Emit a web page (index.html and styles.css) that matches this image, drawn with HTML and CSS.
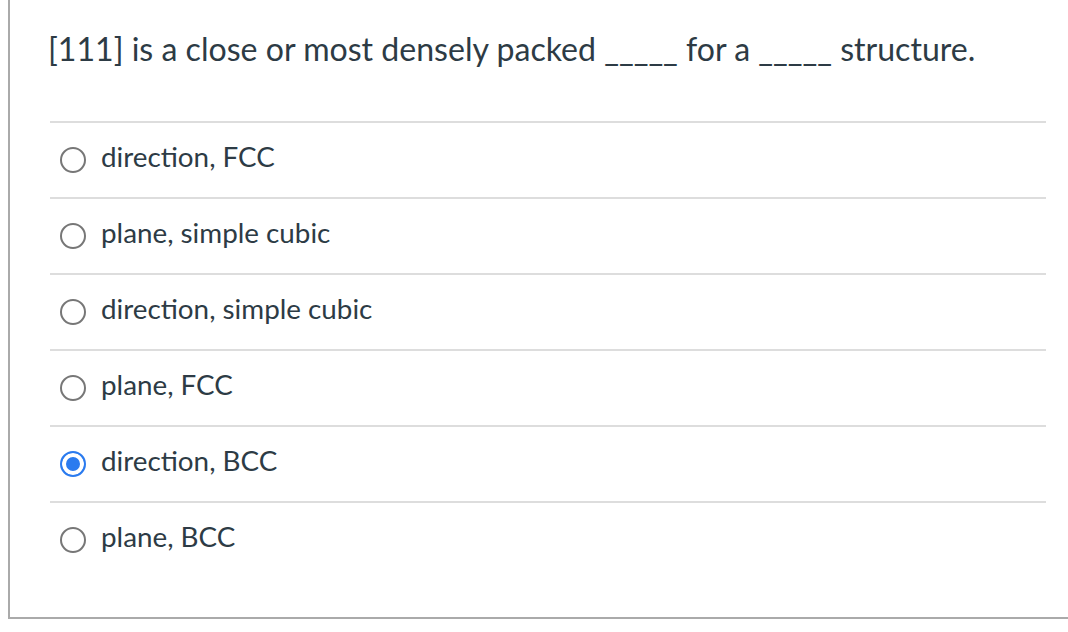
FILE: index.html
```html
<!DOCTYPE html>
<html>
<head>
<meta charset="utf-8">
<link rel="stylesheet" href="styles.css">
</head>
<body>
<div class="quiz">
  <div class="question">[111] is a close or most densely packed _____ for a _____ structure.</div>
  <div class="answers">
    <label class="answer"><span class="radio"></span><span class="label">direction, FCC</span></label>
    <label class="answer"><span class="radio"></span><span class="label">plane, simple cubic</span></label>
    <label class="answer"><span class="radio"></span><span class="label">direction, simple cubic</span></label>
    <label class="answer"><span class="radio"></span><span class="label">plane, FCC</span></label>
    <label class="answer"><span class="radio checked"></span><span class="label">direction, BCC</span></label>
    <label class="answer"><span class="radio"></span><span class="label">plane, BCC</span></label>
  </div>
</div>
</body>
</html>
```
FILE: styles.css
```css
html, body {
  margin: 0;
  padding: 0;
  background: #fff;
  overflow: hidden;
}
body {
  font-family: Lato, "Open Sans", sans-serif;
  color: #2d3b45;
}
.quiz {
  margin-left: 8px;
  width: 1100px;
  height: 619px;
  border-left: 2px solid #aaa;
  border-bottom: 2px solid #aaa;
  box-sizing: border-box;
}
.question {
  padding: 30px 0 0 38px;
  font-size: 32.1px;
  line-height: 38px;
  margin-bottom: 53px;
}
.answers {
  margin-left: 40px;
  width: 996px;
  border-top: 2px solid #ddd;
}
.answer {
  display: flex;
  align-items: flex-start;
  box-sizing: border-box;
  height: 76px;
  padding: 17px 0 0 10px;
  border-bottom: 2px solid #ddd;
}
.answer:last-child {
  border-bottom: none;
}
.radio {
  width: 22px;
  height: 22px;
  border: 2px solid #777;
  border-radius: 50%;
  flex: none;
  margin: 7px 15px 0 0;
  box-sizing: content-box;
}
.radio.checked {
  border-color: #2b7bef;
  background: #2b7bef;
  box-shadow: inset 0 0 0 4px #fff;
}
.label {
  font-size: 27.8px;
  line-height: 34px;
}
```
